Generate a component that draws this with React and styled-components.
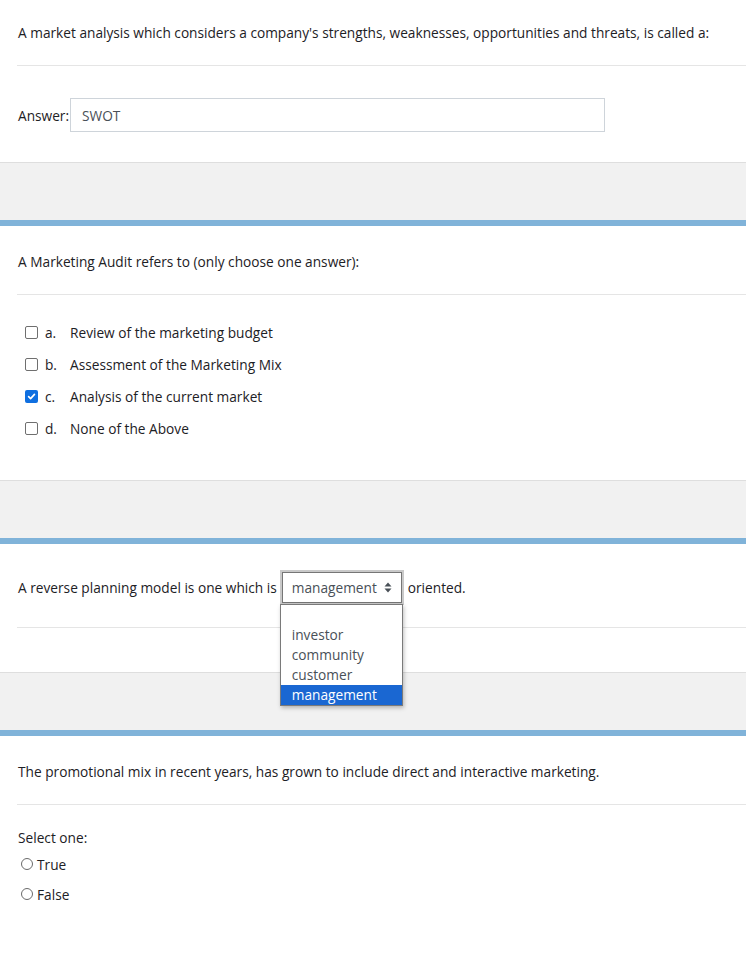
import React from 'react';
import styled, { createGlobalStyle } from 'styled-components';

const GlobalStyle = createGlobalStyle`
	html, body {
		margin: 0;
		padding: 0;
		background: #fff;
	}
	body {
		font-family: 'Open Sans', 'Noto Sans', sans-serif;
		font-size: 13.7px;
		color: #1d2125;
	}
	* {
		box-sizing: border-box;
	}
`;

const options = [
	{ letter: 'a.', text: 'Review of the marketing budget', checked: false },
	{ letter: 'b.', text: 'Assessment of the Marketing Mix', checked: false },
	{ letter: 'c.', text: 'Analysis of the current market', checked: true },
	{ letter: 'd.', text: 'None of the Above', checked: false },
];

const choices = ['investor', 'community', 'customer', 'management'];

const CheckIcon = () => (
	<svg width="9" height="9" viewBox="0 0 10 10">
		<path d="M1.8 5.2 L4 7.4 L8.3 2.6" fill="none" stroke="#fff" strokeWidth="1.8" strokeLinecap="round" strokeLinejoin="round" />
	</svg>
);

const App = () => {
	return (
		<Page>
			<GlobalStyle />
			<Question first>
				<Prompt>
					A market analysis which considers a company's strengths, weaknesses,
					opportunities and threats, is called a:
				</Prompt>
				<Body top={32} bottom={30}>
					<AnswerRow>
						<label>Answer:</label>
						<TextInput>SWOT</TextInput>
					</AnswerRow>
				</Body>
				<Footer />
			</Question>

			<Question>
				<Prompt>A Marketing Audit refers to (only choose one answer):</Prompt>
				<Body top={21} bottom={36}>
					{options.map((o) => (
						<OptionRow key={o.letter}>
							<CheckBox checked={o.checked}>{o.checked && <CheckIcon />}</CheckBox>
							<Letter>{o.letter}</Letter>
							<span>{o.text}</span>
						</OptionRow>
					))}
				</Body>
				<Footer />
			</Question>

			<Question>
				<Prompt>
					<InlineRow>
						<span>A reverse planning model is one which is</span>
						<SelectWrap>
							<SelectBox>
								<span>management</span>
								<Arrows>
									<svg width="8" height="11" viewBox="0 0 8 11">
										<path d="M4 0.5 L7.5 4.5 L0.5 4.5 Z" fill="#495057" />
										<path d="M4 10.5 L7.5 6.5 L0.5 6.5 Z" fill="#495057" />
									</svg>
								</Arrows>
							</SelectBox>
							<DropList>
								<DropItem />
								{choices.map((c) => (
									<DropItem key={c} active={c === 'management'}>
										{c}
									</DropItem>
								))}
							</DropList>
						</SelectWrap>
						<span>oriented.</span>
					</InlineRow>
				</Prompt>
				<Body top={44} bottom={0} />
				<Footer />
			</Question>

			<Question>
				<Prompt>
					The promotional mix in recent years, has grown to include direct and
					interactive marketing.
				</Prompt>
				<Body top={23} bottom={40}>
					<SelectLabel>Select one:</SelectLabel>
					<RadioRow>
						<Radio />
						<span>True</span>
					</RadioRow>
					<RadioRow>
						<Radio />
						<span>False</span>
					</RadioRow>
				</Body>
			</Question>
		</Page>
	);
};

export default App;

const Page = styled.div`
	width: 746px;
	display: flex;
	flex-direction: column;
`;

const Question = styled.section`
	padding-top: ${(p) => (p.first ? '23px' : '26px')};
	position: relative;
`;

const Prompt = styled.div`
	margin-left: 17px;
	padding: 0 0 22px 1px;
	line-height: 20px;
	border-bottom: 1px solid #e5e5e5;
`;

const Body = styled.div`
	padding: ${(p) => p.top}px 0 ${(p) => p.bottom}px 18px;
`;

const Footer = styled.div`
	height: 64px;
	background: #f1f1f1;
	border-top: 1px solid #dedede;
	border-bottom: 6px solid #80b3d9;
`;

const AnswerRow = styled.div`
	display: flex;
	align-items: center;
	gap: 1px;
	label {
		color: #1d2125;
	}
`;

const TextInput = styled.div`
	width: 535px;
	height: 34px;
	border: 1px solid #ced4da;
	padding: 0 11px;
	display: flex;
	align-items: center;
	color: #495057;
`;

const OptionRow = styled.div`
	display: flex;
	align-items: center;
	height: 32px;
	padding-left: 7px;
`;

const CheckBox = styled.span`
	width: 13px;
	height: 13px;
	border-radius: 2px;
	border: ${(p) => (p.checked ? 'none' : '1px solid #6f6f6f')};
	background: ${(p) => (p.checked ? '#0f6fe0' : '#fff')};
	display: flex;
	align-items: center;
	justify-content: center;
	margin-right: 7px;
`;

const Letter = styled.span`
	width: 25px;
`;

const InlineRow = styled.div`
	display: flex;
	align-items: center;
	height: 35px;
`;

const SelectWrap = styled.div`
	position: relative;
	margin: 0 4px 0 3px;
`;

const SelectBox = styled.div`
	width: 124px;
	height: 35px;
	border: 2px solid #c9c9c9;
	box-shadow: inset 0 0 0 1px #767676;
	display: flex;
	align-items: center;
	justify-content: space-between;
	padding: 0 10px 0 10px;
	color: #495057;
	background: #fff;
`;

const Arrows = styled.span`
	display: flex;
	align-items: center;
`;

const DropList = styled.div`
	position: absolute;
	left: 0;
	top: 34px;
	width: 123px;
	border: 1px solid #7a7a7a;
	background: #fff;
	box-shadow: 1px 2px 4px rgba(0, 0, 0, 0.25);
	z-index: 2;
`;

const DropItem = styled.div`
	height: 20px;
	line-height: 20px;
	padding-left: 11px;
	color: ${(p) => (p.active ? '#fff' : '#495057')};
	background: ${(p) => (p.active ? '#1a67d2' : 'transparent')};
`;

const SelectLabel = styled.div`
	line-height: 20px;
	margin-bottom: 1px;
`;

const RadioRow = styled.div`
	display: flex;
	align-items: center;
	height: 30px;
	padding-left: 3px;
	gap: 4px;
`;

const Radio = styled.span`
	width: 12px;
	height: 12px;
	border-radius: 50%;
	border: 1px solid #6a6a6a;
	background: #fff;
`;
